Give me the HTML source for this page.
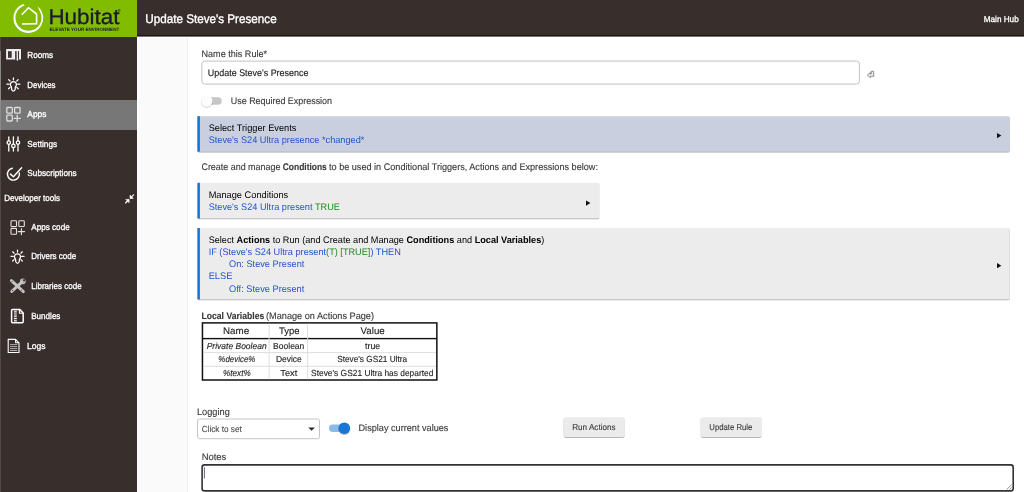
<!DOCTYPE html>
<html lang="en">
<head>
<meta charset="utf-8">
<title>Update Steve's Presence</title>
<style>
html,body{margin:0;padding:0;}
body{width:1024px;height:492px;overflow:hidden;position:relative;background:#fff;font-family:"Liberation Sans",sans-serif;}
.a{position:absolute;box-sizing:border-box;}
svg{position:absolute;overflow:visible;}
.ic{fill:none;stroke:#fff;stroke-width:1.1;stroke-linecap:round;stroke-linejoin:round;}
</style>
</head>
<body>
<!-- page backgrounds -->
<svg style="left:0;top:0" width="200" height="492" viewBox="0 0 200 492"><rect x="138.7" y="38" width="49.1" height="454" fill="#fafafa"/><rect x="187" y="38" width="1" height="454" fill="#ececec"/></svg>
<!-- top bar -->
<header>
<div class="a" style="left:0;top:0;width:1024px;height:35px;background:#382e2c;"></div>
<svg style="left:0;top:0" width="1024" height="40" viewBox="0 0 1024 40"><rect x="137" y="34.9" width="887" height="1.7" fill="#201614"/></svg>
<svg class="txt" style="left:0;top:0;will-change:transform" width="1024" height="492" viewBox="0 0 1024 492" font-family="Liberation Sans, sans-serif" text-rendering="geometricPrecision">
<text x="145.26" y="23.4" font-size="12.4" textLength="131.4" lengthAdjust="spacingAndGlyphs" fill="#fff" stroke="#fff" stroke-width="0.35">Update Steve's Presence</text>
<text x="983.79" y="21.7" font-size="8.5" textLength="34.9" lengthAdjust="spacingAndGlyphs" fill="#fff" stroke="#fff" stroke-width="0.3">Main Hub</text>
</svg>
</header>
<!-- sidebar -->
<nav>
<div class="a" style="left:0;top:0;width:137px;height:492px;background:#382e2c;"></div>
<div class="a" style="left:0;top:37px;width:1px;height:14px;background:#4b4745;"></div>
<div class="a" style="left:0;top:51px;width:1px;height:79px;background:#8c8a89;"></div>
<div class="a" style="left:0;top:130px;width:1px;height:362px;background:#514846;"></div>
<div class="a" style="left:0;top:0;width:137px;height:37.2px;background:#81bc00;"></div>
<div class="a" style="left:1px;top:100px;width:136px;height:29.5px;background:#777;"></div>

<!-- logo -->
<svg style="left:0;top:0" width="138" height="37" viewBox="0 0 138 37">
  <path d="M23.20 4.05 A14.90 14.90 0 1 0 37.47 6.31 L40.08 11.92 A13.00 13.00 0 1 1 24.69 5.39 Z" fill="#fff"/>
  <path d="M21.7 14.7 L28.5 7.7 L36.6 14 L36.6 23.6 L22 24" fill="none" stroke="#fff" stroke-width="1.6" stroke-linejoin="miter" stroke-linecap="butt"/>
</svg>

<!-- sidebar icons -->
<svg style="left:0;top:0" width="138" height="492" viewBox="0 0 138 492">
  <!-- rooms -->
  <rect x="6.1" y="48.9" width="14.9" height="10.7" rx="0.7" fill="#ededed"/>
  <rect x="8" y="51.2" width="3.7" height="6.6" fill="#3d3331"/>
  <rect x="15.1" y="51.1" width="3.9" height="8.5" fill="#3d3331"/>
  <path d="M16.6 51.5 Q17.5 50.4 17.9 50.6 L18 60.9 Q17 60.6 16.6 59.7 Z" fill="#ededed"/>
  <!-- devices (bulb) -->
  <g class="ic" style="stroke-width:1.25">
    <path d="M11.4 86.8 A3 3 0 1 1 15.4 86.8 L15.1 89.6 Q13.4 92.6 11.7 89.6 Z"/>
    <path d="M13.4 77.9 V79.8 M8.6 79.6 L10 81 M18.2 79.6 L16.8 81 M6.9 84.2 H9.2 M17.6 84.2 H19.9 M8.6 88.8 L10 87.4 M18.2 88.8 L16.8 87.4"/>
  </g>
  <!-- apps -->
  <g class="ic" style="stroke:#dcdcdc;stroke-width:1.3">
    <rect x="6.8" y="107.5" width="5.5" height="5.7" rx="0.8"/>
    <rect x="14.6" y="107.5" width="5.5" height="5.7" rx="0.8"/>
    <rect x="6.8" y="115.1" width="5.5" height="5.9" rx="0.8"/>
    <path d="M17.2 115.2 V121.4 M14.1 118.3 H20.4"/>
  </g>
  <!-- settings sliders -->
  <g class="ic" style="stroke-width:1.3">
    <path d="M8.8 136.8 V140.6 M8.8 144.6 V151 M13.4 136.8 V143.9 M13.4 147.9 V151 M18 136.8 V140.6 M18 144.6 V151"/>
    <circle cx="8.8" cy="142.6" r="1.7"/><circle cx="13.4" cy="145.9" r="1.7"/><circle cx="18" cy="142.6" r="1.7"/>
  </g>
  <!-- subscriptions -->
  <g class="ic" style="stroke-width:1.45">
    <path d="M12.4 168.2 A6 6 0 1 0 19.3 172.9"/>
    <path d="M10.5 174.1 L13.4 176.8 L21.6 167.7"/>
  </g>
  <!-- collapse -->
  <g class="ic" style="stroke-width:1.15">
    <path d="M133.6 194.8 L130.6 197.8 M125.5 203 L128.5 200"/>
    <path d="M130 195.4 V198.4 H133 Z M129.1 202.4 V199.4 H126.1 Z" style="fill:#fff;stroke-width:.6"/>
  </g>
  <!-- apps code -->
  <g class="ic" style="stroke-width:1.1;stroke:#e2e2e2" transform="translate(4.2 113.3)">
    <rect x="6.8" y="107.5" width="5.5" height="5.7" rx="0.8"/>
    <rect x="14.6" y="107.5" width="5.5" height="5.7" rx="0.8"/>
    <rect x="6.8" y="115.1" width="5.5" height="5.9" rx="0.8"/>
    <path d="M17.2 115.2 V121.4 M14.1 118.3 H20.4"/>
  </g>
  <!-- drivers code (bulb) -->
  <g class="ic" style="stroke-width:1.25">
    <path d="M15.5 259 A3 3 0 1 1 19.5 259 L19.2 261.8 Q17.5 264.8 15.8 261.8 Z"/>
    <path d="M17.5 250.1 V252 M12.7 251.8 L14.1 253.2 M22.3 251.8 L20.9 253.2 M11 256.4 H13.3 M21.7 256.4 H24 M12.7 261 L14.1 259.6 M22.3 261 L20.9 259.6"/>
  </g>
  <!-- libraries code (tools) -->
  <g fill="none" stroke="#c4c4c4" stroke-linecap="round">
    <path d="M11.4 280.6 L23.4 291.6" stroke-width="2.9"/>
    <path d="M22.4 281.6 L11.8 291.4" stroke-width="2.9"/>
    <circle cx="22.8" cy="281.3" r="2.2" stroke-width="1.3"/>
  </g>
  <path d="M22.6 279.6 L24.4 281.4 L25.6 279.2 Z" fill="#382e2c"/>
  <circle cx="12.6" cy="290.6" r="0.6" fill="#382e2c"/><circle cx="12" cy="281.2" r="0.5" fill="#382e2c"/><circle cx="21.6" cy="289.9" r="0.5" fill="#382e2c"/>
  <!-- bundles -->
  <g class="ic" style="stroke-width:1.5">
    <path d="M12.6 309.4 H19.6 L23.2 313 V321.7 Q23.2 322.7 22.2 322.7 H12.6 Q11.6 322.7 11.6 321.7 V310.4 Q11.6 309.4 12.6 309.4 Z"/>
    <path d="M19.4 309.6 V313.2 H23" style="stroke-width:1.1"/>
    <path d="M15.4 310.8 V322" style="stroke-width:2.8;stroke-dasharray:1 .8;stroke-linecap:butt"/>
  </g>
  <!-- logs -->
  <g class="ic" style="stroke-width:1.1">
    <path d="M8.2 339.4 H15.6 L19 342.8 V352.5 H8.2 Z M15.6 339.4 V342.8 H19"/>
    <path d="M10.4 344.6 H16.8 M10.4 346.6 H16.8 M10.4 348.6 H16.8 M10.4 350.5 H16.8" style="stroke-width:.9;stroke:#bbb"/>
  </g>
</svg>

<svg class="txt" style="left:0;top:0;will-change:transform" width="1024" height="492" viewBox="0 0 1024 492" font-family="Liberation Sans, sans-serif" text-rendering="geometricPrecision">
<text x="27.37" y="58.0" font-size="8.8" textLength="25.8" lengthAdjust="spacingAndGlyphs" fill="#fff" stroke="#fff" stroke-width="0.3">Rooms</text>
<text x="27.37" y="87.6" font-size="8.8" textLength="28.2" lengthAdjust="spacingAndGlyphs" fill="#fff" stroke="#fff" stroke-width="0.3">Devices</text>
<text x="27.37" y="117.2" font-size="8.8" textLength="19.0" lengthAdjust="spacingAndGlyphs" fill="#fff" stroke="#fff" stroke-width="0.3">Apps</text>
<text x="27.37" y="146.8" font-size="8.8" textLength="29.8" lengthAdjust="spacingAndGlyphs" fill="#fff" stroke="#fff" stroke-width="0.3">Settings</text>
<text x="27.37" y="176.4" font-size="8.8" textLength="49.3" lengthAdjust="spacingAndGlyphs" fill="#fff" stroke="#fff" stroke-width="0.3">Subscriptions</text>
<text x="4.27" y="201.0" font-size="8.8" textLength="55.7" lengthAdjust="spacingAndGlyphs" fill="#fff" stroke="#fff" stroke-width="0.3">Developer tools</text>
<text x="31.22" y="229.7" font-size="8.8" textLength="38.5" lengthAdjust="spacingAndGlyphs" fill="#fff" stroke="#fff" stroke-width="0.3">Apps code</text>
<text x="31.22" y="259.3" font-size="8.8" textLength="45.0" lengthAdjust="spacingAndGlyphs" fill="#fff" stroke="#fff" stroke-width="0.3">Drivers code</text>
<text x="31.22" y="289.0" font-size="8.8" textLength="50.5" lengthAdjust="spacingAndGlyphs" fill="#fff" stroke="#fff" stroke-width="0.3">Libraries code</text>
<text x="31.22" y="318.9" font-size="8.8" textLength="29.2" lengthAdjust="spacingAndGlyphs" fill="#fff" stroke="#fff" stroke-width="0.3">Bundles</text>
<text x="26.97" y="348.6" font-size="8.8" textLength="18.5" lengthAdjust="spacingAndGlyphs" fill="#fff" stroke="#fff" stroke-width="0.3">Logs</text>
<text x="48.42" y="23.5" font-size="21.3" textLength="71.1" lengthAdjust="spacingAndGlyphs" fill="#1b1930" stroke="#1b1930" stroke-width="0.3">Hubitat</text>
<text x="49.52" y="30.6" font-size="4.7" textLength="69.7" lengthAdjust="spacingAndGlyphs" fill="#1b1930" font-weight="bold">ELEVATE YOUR ENVIRONMENT</text>
<text x="117.45" y="11.7" font-size="4.2" fill="#1b1930" font-weight="bold">®</text>
</svg>
</nav>
<!-- main content shapes -->
<main>
<svg style="left:0;top:0" width="1024" height="492" viewBox="0 0 1024 492">
  <defs>
    <filter id="sh" x="-5%" y="-20%" width="110%" height="150%"><feGaussianBlur stdDeviation="0.7"/></filter>
  </defs>
  <!-- name input -->
  <rect x="201.8" y="61.1" width="657.6" height="23" rx="3" fill="#fff" stroke="#c2c2c2" stroke-width="1"/>
  <path d="M871.2 71.3 H873.7 V76.3 H870.4 V77.7 L867.3 75.1 L870.4 72.5 V74 H871.2 Z" fill="#ececec" stroke="#666" stroke-width="0.7" stroke-linejoin="round"/>
  <!-- toggle off -->
  <rect x="204.5" y="97.2" width="17.2" height="7.6" rx="3.8" fill="#c6c6c6"/>
  <circle cx="206.8" cy="101.8" r="6" fill="#000" opacity=".22" filter="url(#sh)"/>
  <circle cx="206.8" cy="101.1" r="5.8" fill="#fcfcfc"/>

  <!-- panels -->
  <rect x="197.8" y="117" width="811.8" height="35.4" rx="1.5" fill="#000" opacity=".35" filter="url(#sh)"/>
  <rect x="197.4" y="116.2" width="812.2" height="35.5" rx="1.5" fill="#c9cfde"/>
  <rect x="197.4" y="116.2" width="2.5" height="35.5" fill="#1b74d3"/>

  <rect x="197.8" y="183.6" width="401.4" height="35.6" rx="1.5" fill="#000" opacity=".35" filter="url(#sh)"/>
  <rect x="197.4" y="182.8" width="401.8" height="35.7" rx="1.5" fill="#ececec"/>
  <rect x="197.4" y="182.8" width="2.5" height="35.7" fill="#1b74d3"/>

  <rect x="197.8" y="228.8" width="811.8" height="71.4" rx="1.5" fill="#000" opacity=".35" filter="url(#sh)"/>
  <rect x="197.4" y="228" width="812.2" height="71.5" rx="1.5" fill="#ececec"/>
  <rect x="197.4" y="228" width="2.5" height="71.5" fill="#1b74d3"/>

  <path d="M997 133 L1001.4 135.6 L997 138.2 Z" fill="#111"/>
  <path d="M586 200.5 L590.4 203.1 L586 205.7 Z" fill="#111"/>
  <path d="M997 263.1 L1001.4 265.7 L997 268.3 Z" fill="#111"/>

  <!-- table -->
  <rect x="202.45" y="322.9" width="234.4" height="57.1" fill="#fff" stroke="#111" stroke-width="1.5"/>
  <rect x="202" y="337.9" width="235" height="1.4" fill="#111"/>
  <path d="M203.2 352.6 H436 M203.2 366.3 H436 M269.1 323.7 V379.2 M307.6 323.7 V379.2" stroke="#dedede" stroke-width="1" fill="none"/>

  <!-- logging select -->
  <rect x="197.5" y="419" width="122" height="19.7" rx="2" fill="#fff" stroke="#c4c4c4" stroke-width="1"/>
  <path d="M308.4 427.5 H314.8 L311.6 430.7 Z" fill="#222"/>
  <!-- toggle on -->
  <rect x="329" y="424.6" width="19" height="7.4" rx="3.7" fill="#8dbbe9"/>
  <circle cx="344.3" cy="428.9" r="6" fill="#000" opacity=".28" filter="url(#sh)"/>
  <circle cx="344.3" cy="428.2" r="5.8" fill="#1976d2"/>
  <!-- buttons -->
  <rect x="563.7" y="418.2" width="60.9" height="19.6" rx="2" fill="#000" opacity=".38" filter="url(#sh)"/>
  <rect x="563.3" y="417.2" width="61.6" height="19.8" rx="2" fill="#ebebeb"/>
  <rect x="700.8" y="418.2" width="60.9" height="19.6" rx="2" fill="#000" opacity=".38" filter="url(#sh)"/>
  <rect x="700.4" y="417.2" width="61.6" height="19.8" rx="2" fill="#ebebeb"/>
  <!-- notes textarea -->
  <rect x="202.1" y="464.9" width="811.1" height="26" rx="2.5" fill="#fff" stroke="#333" stroke-width="1.6"/>
  <rect x="203.9" y="467.3" width="0.9" height="11.2" fill="#557"/>
  <path d="M1011.6 484.6 L1006.6 489.6 M1011.6 487.4 L1009.4 489.6" stroke="#777" stroke-width=".8" fill="none"/>
</svg>

<svg class="txt" style="left:0;top:0;will-change:transform" width="1024" height="492" viewBox="0 0 1024 492" font-family="Liberation Sans, sans-serif" text-rendering="geometricPrecision">
<text x="201.53" y="57.2" font-size="9.5" textLength="65.5" lengthAdjust="spacingAndGlyphs" fill="#383838" stroke="#383838" stroke-width="0.12">Name this Rule*</text>
<text x="207.83" y="76.0" font-size="9.5" textLength="100.6" lengthAdjust="spacingAndGlyphs" fill="#222" stroke="#222" stroke-width="0.15">Update Steve's Presence</text>
<text x="230.83" y="103.5" font-size="9.5" textLength="101.2" lengthAdjust="spacingAndGlyphs" fill="#383838" stroke="#383838" stroke-width="0.12">Use Required Expression</text>
<text x="201.43" y="170.2" font-size="9.5" textLength="79.0" lengthAdjust="spacingAndGlyphs" fill="#383838" stroke="#383838" stroke-width="0.12">Create and manage</text>
<text x="282.73" y="170.2" font-size="9.5" textLength="44.1" lengthAdjust="spacingAndGlyphs" fill="#383838" stroke="#383838" stroke-width="0.12"><tspan font-weight="bold">Conditions</tspan></text>
<text x="329.03" y="170.2" font-size="9.5" textLength="268.9" lengthAdjust="spacingAndGlyphs" fill="#383838" stroke="#383838" stroke-width="0.12">to be used in Conditional Triggers, Actions and Expressions below:</text>
<text x="201.53" y="318.6" font-size="9.5" textLength="62.7" lengthAdjust="spacingAndGlyphs" fill="#383838" stroke="#383838" stroke-width="0.12"><tspan font-weight="bold">Local Variables</tspan></text>
<text x="266.03" y="318.6" font-size="9.5" textLength="108.0" lengthAdjust="spacingAndGlyphs" fill="#383838" stroke="#383838" stroke-width="0.12">(Manage on Actions Page)</text>
<text x="196.93" y="414.9" font-size="9.5" textLength="32.9" lengthAdjust="spacingAndGlyphs" fill="#383838" stroke="#383838" stroke-width="0.12">Logging</text>
<text x="201.67" y="431.6" font-size="8.8" textLength="40.1" lengthAdjust="spacingAndGlyphs" fill="#4a4a4a" stroke="#4a4a4a" stroke-width="0.1">Click to set</text>
<text x="358.53" y="430.8" font-size="9.5" textLength="89.9" lengthAdjust="spacingAndGlyphs" fill="#383838" stroke="#383838" stroke-width="0.12">Display current values</text>
<text x="201.73" y="460.3" font-size="9.5" textLength="24.6" lengthAdjust="spacingAndGlyphs" fill="#383838" stroke="#383838" stroke-width="0.12">Notes</text>
<text x="572.19" y="430.0" font-size="8.5" textLength="43.4" lengthAdjust="spacingAndGlyphs" fill="#383838" stroke="#383838" stroke-width="0.12">Run Actions</text>
<text x="709.29" y="430.0" font-size="8.5" textLength="43.1" lengthAdjust="spacingAndGlyphs" fill="#383838" stroke="#383838" stroke-width="0.12">Update Rule</text>
<text x="208.63" y="131.0" font-size="9.5" textLength="87.8" lengthAdjust="spacingAndGlyphs" fill="#000">Select Trigger Events</text>
<text x="208.63" y="143.4" font-size="9.5" textLength="155.7" lengthAdjust="spacingAndGlyphs" fill="#2553cc">Steve's S24 Ultra presence *changed*</text>
<text x="208.63" y="197.6" font-size="9.5" textLength="79.6" lengthAdjust="spacingAndGlyphs" fill="#000">Manage Conditions</text>
<text x="208.63" y="210.2" font-size="9.5" textLength="131.3" lengthAdjust="spacingAndGlyphs" fill="#2553cc">Steve's S24 Ultra present <tspan fill="#1f8a1f">TRUE</tspan></text>
<text x="208.63" y="242.8" font-size="9.5" textLength="335.7" lengthAdjust="spacingAndGlyphs" fill="#000">Select <tspan font-weight="bold">Actions</tspan> to Run (and Create and Manage <tspan font-weight="bold">Conditions</tspan> and <tspan font-weight="bold">Local Variables</tspan>)</text>
<text x="208.63" y="254.9" font-size="9.5" textLength="192.2" lengthAdjust="spacingAndGlyphs" fill="#2553cc">IF (Steve's S24 Ultra present<tspan fill="#1f8a1f">(T) [TRUE]</tspan>) THEN</text>
<text x="229.03" y="267.1" font-size="9.5" textLength="75.3" lengthAdjust="spacingAndGlyphs" fill="#2553cc">On: Steve Present</text>
<text x="208.63" y="279.3" font-size="9.5" textLength="23.8" lengthAdjust="spacingAndGlyphs" fill="#2553cc">ELSE</text>
<text x="229.03" y="291.6" font-size="9.5" textLength="75.3" lengthAdjust="spacingAndGlyphs" fill="#2553cc">Off: Steve Present</text>
<text x="223.02" y="334.2" font-size="9.6" textLength="26.1" lengthAdjust="spacingAndGlyphs" fill="#222" stroke="#222" stroke-width="0.12">Name</text>
<text x="278.92" y="334.2" font-size="9.6" textLength="20.6" lengthAdjust="spacingAndGlyphs" fill="#222" stroke="#222" stroke-width="0.12">Type</text>
<text x="360.62" y="334.2" font-size="9.6" textLength="24.1" lengthAdjust="spacingAndGlyphs" fill="#222" stroke="#222" stroke-width="0.12">Value</text>
<text x="206.67" y="348.5" font-size="8.8" textLength="60.0" lengthAdjust="spacingAndGlyphs" fill="#222" stroke="#222" stroke-width="0.12"><tspan font-style="italic">Private Boolean</tspan></text>
<text x="273.07" y="348.5" font-size="8.8" textLength="31.3" lengthAdjust="spacingAndGlyphs" fill="#222" stroke="#222" stroke-width="0.12">Boolean</text>
<text x="365.07" y="348.5" font-size="8.8" textLength="15.1" lengthAdjust="spacingAndGlyphs" fill="#222" stroke="#222" stroke-width="0.12">true</text>
<text x="218.37" y="362.2" font-size="8.8" textLength="37.0" lengthAdjust="spacingAndGlyphs" fill="#222" stroke="#222" stroke-width="0.12"><tspan font-style="italic">%device%</tspan></text>
<text x="275.97" y="362.2" font-size="8.8" textLength="25.8" lengthAdjust="spacingAndGlyphs" fill="#222" stroke="#222" stroke-width="0.12">Device</text>
<text x="337.17" y="362.2" font-size="8.8" textLength="69.9" lengthAdjust="spacingAndGlyphs" fill="#222" stroke="#222" stroke-width="0.12">Steve's GS21 Ultra</text>
<text x="223.07" y="375.8" font-size="8.8" textLength="27.6" lengthAdjust="spacingAndGlyphs" fill="#222" stroke="#222" stroke-width="0.12"><tspan font-style="italic">%text%</tspan></text>
<text x="280.27" y="375.8" font-size="8.8" textLength="17.0" lengthAdjust="spacingAndGlyphs" fill="#222" stroke="#222" stroke-width="0.12">Text</text>
<text x="311.07" y="375.8" font-size="8.8" textLength="122.3" lengthAdjust="spacingAndGlyphs" fill="#222" stroke="#222" stroke-width="0.12">Steve's GS21 Ultra has departed</text>
</svg>
</main>
</body>
</html>
